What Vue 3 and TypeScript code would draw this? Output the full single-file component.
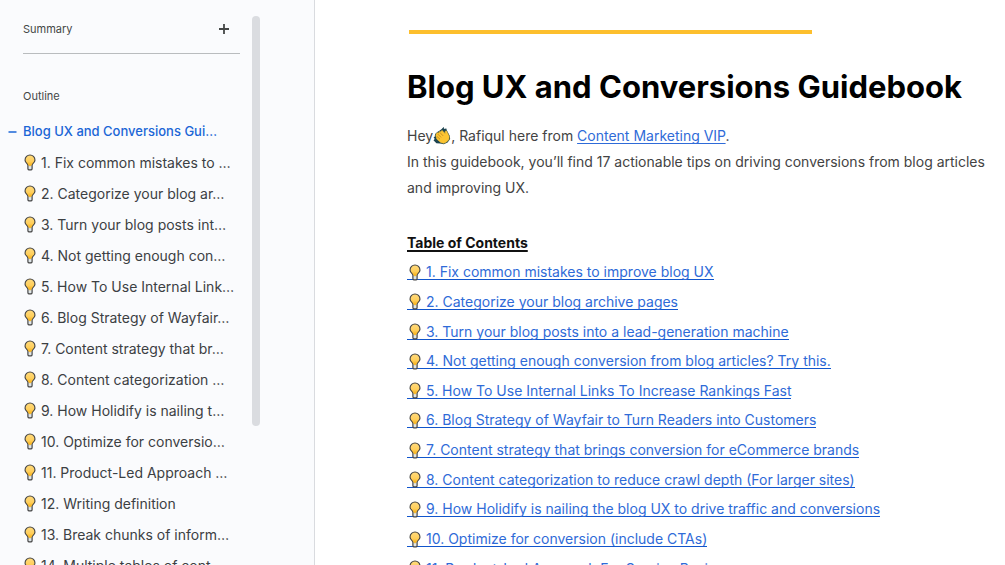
<script setup lang="ts">
import { ref } from 'vue'

interface OutlineEntry {
  id: number
  label: string
}

const outline: OutlineEntry[] = [
  '1. Fix common mistakes to …',
  '2. Categorize your blog ar…',
  '3. Turn your blog posts int…',
  '4. Not getting enough con…',
  '5. How To Use Internal Link…',
  '6. Blog Strategy of Wayfair…',
  '7. Content strategy that br…',
  '8. Content categorization …',
  '9. How Holidify is nailing t…',
  '10. Optimize for conversio…',
  '11. Product-Led Approach …',
  '12. Writing definition',
  '13. Break chunks of inform…',
  '14. Multiple tables of cont…',
].map((label, i) => ({ id: i + 1, label }))

const contents: OutlineEntry[] = [
  '1. Fix common mistakes to improve blog UX',
  '2. Categorize your blog archive pages',
  '3. Turn your blog posts into a lead-generation machine',
  '4. Not getting enough conversion from blog articles? Try this.',
  '5. How To Use Internal Links To Increase Rankings Fast',
  '6. Blog Strategy of Wayfair to Turn Readers into Customers',
  '7. Content strategy that brings conversion for eCommerce brands',
  '8. Content categorization to reduce crawl depth (For larger sites)',
  '9. How Holidify is nailing the blog UX to drive traffic and conversions',
  '10. Optimize for conversion (include CTAs)',
  '11. Product-Led Approach For Service Business',
].map((label, i) => ({ id: i + 1, label }))

const expanded = ref(true)
</script>

<template>
  <div class="app">
    <svg class="defs" width="0" height="0" aria-hidden="true">
      <defs>
        <linearGradient id="bulb-fill" x1="0" y1="0" x2="0" y2="1">
          <stop offset="0" stop-color="#ffd97a" />
          <stop offset="0.6" stop-color="#ffcf5c" />
          <stop offset="1" stop-color="#f9b31c" />
        </linearGradient>
        <symbol id="bulb" viewBox="0 0 12 17">
          <path d="M3.3 14.6V11.2C3.3 9.6 .5 8.6 .5 5.9A5.5 5.4 0 0 1 11.5 5.9C11.5 8.6 8.7 9.6 8.7 11.2V14.6Q8.7 16.5 7.2 16.5H4.8Q3.3 16.5 3.3 14.6Z" fill="#454545" />
          <path d="M4.3 11.2C4.3 9.2 1.6 8.2 1.6 5.9A4.4 4.3 0 0 1 10.4 5.9C10.4 8.2 7.7 9.2 7.7 11.2Z" fill="url(#bulb-fill)" />
          <path d="M4.5 11.2H7.5V14.6Q7.5 15.2 7 15.2H5Q4.5 15.2 4.5 14.6Z" fill="#dfe5e8" />
          <path d="M4.9 10.5H7.1V12.2H4.9Z" fill="#f5b82e" />
        </symbol>
      </defs>
    </svg>

    <aside class="sidebar">
      <div class="panel">
        <div class="summary">
          <h2 class="caption">Summary</h2>
          <button class="add" type="button" aria-label="Add summary">
            <svg width="12" height="12" viewBox="0 0 12 12"><path d="M6 1V11M1 6H11" stroke="#444746" stroke-width="1.8" /></svg>
          </button>
        </div>
        <h2 class="caption outline-caption">Outline</h2>
        <nav class="outline" aria-label="Outline">
          <div class="root">
            <button class="toggle" type="button" aria-label="Toggle outline" :aria-expanded="expanded" @click="expanded = !expanded">
              <svg width="9" height="9" viewBox="0 0 9 9"><path d="M.5 5H8.5" stroke="#1b66d6" stroke-width="1.5" /></svg>
            </button>
            <a class="root-link" href="#guidebook">Blog UX and Conversions Gui…</a>
          </div>
          <ul v-show="expanded" class="entries">
            <li v-for="entry in outline" :key="entry.id">
              <a class="entry" :href="`#tip-${entry.id}`"><svg class="bulb" aria-hidden="true"><use href="#bulb" /></svg><span>{{ entry.label }}</span></a>
            </li>
          </ul>
        </nav>
      </div>
      <div class="track"><div class="thumb"></div></div>
    </aside>

    <main class="document">
      <div class="rule"></div>
      <h1 id="guidebook" class="title">Blog UX and Conversions Guidebook</h1>
      <p class="intro">
        Hey<svg class="clap" viewBox="0 0 17 17" aria-hidden="true">
          <path d="M6.4 3.4L9.4 .9L11.2 2L12.4 1.2L13.2 3.4L15.8 8.2L16.2 11.4L13.8 14.6L10.2 16.4L6.6 15.6L3.2 15.4L1.2 13.2L1.4 10.4L2 6.6L4 4.8Z" fill="#1d4450" />
          <path d="M4 5.4L5.4 5.9L5.9 4.4L7.4 4.6L8.4 3.2L9.8 4.4L11.6 6.6L11.5 4.2L12.6 3.6L13.6 5.4L15.2 9L15 11.8L13 14L10.2 15.4L7.4 14.6L3.6 11.4L3.3 10L2.7 8.4L3 6.6Z" fill="#fcc532" stroke="#fcc532" stroke-width=".6" stroke-linejoin="round" />
          <path d="M4.2 6.4L7.6 9.8M6.3 5L9.6 8.4M3.6 8.8L6.6 11.5" fill="none" stroke="#b97f1e" stroke-width=".7" />
          <path d="M.8 10.2L2.4 9.6M.8 13L2.6 11.8M10 .3L9.4 2" stroke="#1d4450" stroke-width="1" />
        </svg>, Rafiqul here from <a class="link" href="#content-marketing-vip">Content Marketing VIP</a>.<br />
        In this guidebook, you’ll find 17 actionable tips on driving conversions from blog articles and improving UX.
      </p>
      <h2 class="toc-title">Table of Contents</h2>
      <ul class="toc">
        <li v-for="entry in contents" :key="entry.id">
          <a class="toc-link" :href="`#tip-${entry.id}`"><svg class="bulb" aria-hidden="true"><use href="#bulb" /></svg><span>{{ entry.label }}</span></a>
        </li>
      </ul>
    </main>
  </div>
</template>

<style>
body {
  background: #fff;
  overflow: hidden;
}
</style>

<style scoped>
.app {
  display: flex;
  height: 100vh;
  overflow: hidden;
  font-family: Inter, 'Liberation Sans', sans-serif;
  color: #434343;
}
.defs {
  position: absolute;
}
h1,
h2,
p,
ul {
  margin: 0;
  padding: 0;
}
ul {
  list-style: none;
}
a {
  text-decoration: none;
}
button {
  display: flex;
  align-items: center;
  justify-content: center;
  padding: 0;
  border: 0;
  background: none;
}
.sidebar {
  display: flex;
  flex: 0 0 315px;
  box-sizing: border-box;
  border-right: 1px solid #d9dbdf;
  background: #fafbfd;
  overflow: hidden;
}
.panel {
  flex: 0 0 240px;
  white-space: nowrap;
}
.summary {
  display: flex;
  justify-content: space-between;
  align-items: center;
  height: 24px;
  margin: 17px 0 0 23px;
  padding-bottom: 12px;
  border-bottom: 1px solid #b9bcbe;
}
.caption {
  font-size: 11px;
  line-height: 16px;
  font-weight: 400;
  color: #444746;
}
.add {
  width: 12px;
  height: 24px;
  margin-right: 10px;
}
.outline-caption {
  margin: 34px 0 0 23px;
}
.outline {
  margin-top: 12px;
  font-size: 14px;
  line-height: 31px;
}
.root {
  display: flex;
  align-items: center;
}
.toggle {
  width: 9px;
  height: 31px;
  margin: 0 6px 0 8px;
}
.root-link {
  font-size: 13px;
  font-weight: 500;
  color: #1b66d6;
}
.entry {
  display: flex;
  align-items: center;
  gap: 5px;
  height: 31px;
  margin-left: 24px;
  line-height: 29px;
  color: #3c4043;
}
.bulb {
  flex: none;
  width: 12px;
  height: 17px;
}
.track {
  flex: 0 0 8px;
  margin: 16px 0 0 12px;
}
.thumb {
  height: 410px;
  border-radius: 4px;
  background: #dadce0;
}
.document {
  flex: 1;
  min-width: 0;
  padding: 30px 10px 0 92px;
  overflow: hidden;
}
.rule {
  width: 403px;
  max-width: 100%;
  height: 4px;
  margin-left: 2px;
  background: #fdbf2d;
}
.title {
  margin-top: 33px;
  font-size: 31px;
  line-height: 40px;
  font-weight: 700;
  color: #000;
  white-space: nowrap;
}
.intro {
  margin-top: 16px;
  font-size: 14px;
  line-height: 26px;
  font-weight: 400;
}
.clap {
  width: 18px;
  height: 18px;
  vertical-align: -4px;
}
.link {
  color: #2f6bd8;
  text-decoration: underline;
  text-decoration-skip-ink: none;
  text-underline-offset: 2px;
}
.toc-title {
  margin-top: 30px;
  font-size: 14px;
  line-height: 24px;
  font-weight: 700;
  color: #111;
  text-decoration: underline;
  text-decoration-thickness: 2px;
  text-underline-offset: 2px;
}
.toc {
  display: grid;
  grid-auto-rows: 1fr;
  min-height: 326px;
  margin-top: 3px;
  font-size: 14px;
  white-space: nowrap;
}
.toc li {
  display: flex;
  align-items: center;
}
.toc-link {
  display: flex;
  align-items: center;
  gap: 5px;
  padding-left: 2px;
  border-bottom: 1px solid #1155cc;
  line-height: 16px;
  height: 14px;
  color: #2f6bd8;
}
</style>
